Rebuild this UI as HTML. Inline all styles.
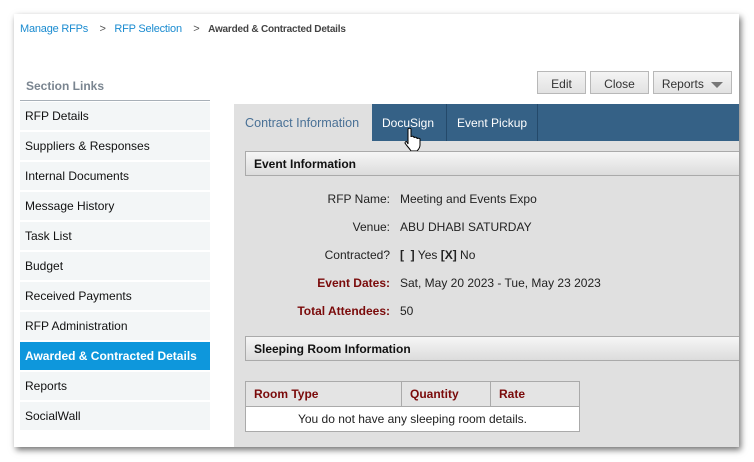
<!DOCTYPE html>
<html><head><style>
*{margin:0;padding:0;box-sizing:border-box}
body{width:754px;height:462px;background:#fff;font-family:"Liberation Sans",Arial,sans-serif;font-size:12px;position:relative;overflow:hidden}
.card{position:absolute;left:14px;top:14px;width:725px;height:433px;background:#fff;box-shadow:2px 3px 6px rgba(0,0,0,.55)}
.a{position:absolute}
.bc{top:23px;left:20px;color:#1a8bd0;font-size:11px;letter-spacing:-0.2px}
.bc b{color:#444;font-weight:bold}
.sl{left:26px;top:79px;font-weight:bold;color:#7a8590;font-size:12px}
.line{left:20px;top:100px;width:190px;height:1px;background:#a8b0b8}
.item{position:absolute;left:20px;width:190px;height:28px;background:#f3f6f7;color:#111;padding:7px 5px;font-size:12px}
.item.act{background:#0e97dc;color:#fff;font-weight:bold}
.btn{position:absolute;top:71px;height:23px;border:1px solid #b8b8b8;background:linear-gradient(#f4f4f4,#e2e2e2);color:#333;text-align:center;padding-top:5px;font-size:12px}
.panel{left:234px;top:104px;width:505px;height:343px;background:#e0e0e0}
.tabs{left:234px;top:104px;width:505px;height:37px;background:#356186}
.tab{position:absolute;top:104px;height:37px;color:#fff;padding-top:12px;font-size:12px;border-right:1px solid #24496a}
.hdr{position:absolute;left:245px;width:494px;height:25px;border:1px solid #aaa;border-right:none;background:linear-gradient(#f6f6f6,#dcdcdc);font-weight:bold;padding:5px 8px;color:#111}
.lab{position:absolute;width:160px;left:230px;text-align:right;color:#222}
.lab.r{color:#7a0a0a;font-weight:bold}
.val{position:absolute;left:400px;color:#222}
table{position:absolute;left:245px;top:381px;width:335px;border-collapse:collapse;background:#fff}
td,th{border:1px solid #aaa;font-size:12px;height:25px}
th{background:#e4e4e4;color:#7a0a0a;text-align:left;padding-left:8px}
</style></head><body>
<div class="card"></div>
<div class="a bc">Manage RFPs &nbsp;&nbsp; <span style="color:#555">&gt;</span> &nbsp;&nbsp;RFP Selection &nbsp;&nbsp; <span style="color:#555">&gt;</span> &nbsp;&nbsp;<b style="font-size:10px">Awarded &amp; Contracted Details</b></div>
<div class="a sl">Section Links</div>
<div class="a line"></div>
<div class="item" style="top:102px">RFP Details</div>
<div class="item" style="top:132px">Suppliers &amp; Responses</div>
<div class="item" style="top:162px">Internal Documents</div>
<div class="item" style="top:192px">Message History</div>
<div class="item" style="top:222px">Task List</div>
<div class="item" style="top:252px">Budget</div>
<div class="item" style="top:282px">Received Payments</div>
<div class="item" style="top:312px">RFP Administration</div>
<div class="item act" style="top:342px">Awarded &amp; Contracted Details</div>
<div class="item" style="top:372px">Reports</div>
<div class="item" style="top:402px">SocialWall</div>
<div class="btn" style="left:537px;width:49px">Edit</div>
<div class="btn" style="left:590px;width:59px">Close</div>
<div class="btn" style="left:653px;width:79px;padding-left:0">Reports <span style="display:inline-block;width:0;height:0;border-left:6px solid transparent;border-right:6px solid transparent;border-top:6px solid #777;margin-left:4px;vertical-align:middle"></span></div>
<div class="a panel"></div>
<div class="a tabs"></div>
<div class="tab" style="left:234px;width:138px;background:#e0e0e0;color:#4a7196;padding-left:11px;border:none;font-size:12.6px">Contract Information</div>
<div class="tab" style="left:372px;width:75px;padding-left:10px">DocuSign</div>
<div class="tab" style="left:447px;width:91px;padding-left:10px">Event Pickup</div>
<svg class="a" style="left:404px;top:127px" width="20" height="26" viewBox="0 0 20 26"><path d="M4 2c1-1 2.5-1 3 0v8c0-1 3-1 3 0v1c0-1 3-1 3 0v1c0-1 3-1 3 0v6c0 3-2 5-3 6H7c-1-2-5-6-6-8 0-1 1-2 2-1l1 2z" fill="#fff" stroke="#000" stroke-width="1"/></svg>
<div class="hdr" style="top:151px">Event Information</div>
<div class="lab" style="top:192px">RFP Name:</div><div class="val" style="top:192px">Meeting and Events Expo</div>
<div class="lab" style="top:220px">Venue:</div><div class="val" style="top:220px">ABU DHABI SATURDAY</div>
<div class="lab" style="top:248px">Contracted?</div><div class="val" style="top:248px"><b>[ &nbsp;]</b> Yes <b>[X]</b> No</div>
<div class="lab r" style="top:276px">Event Dates:</div><div class="val" style="top:276px">Sat, May 20 2023 - Tue, May 23 2023</div>
<div class="lab r" style="top:304px">Total Attendees:</div><div class="val" style="top:304px">50</div>
<div class="hdr" style="top:336px">Sleeping Room Information</div>
<table><tr><th style="width:156px">Room Type</th><th style="width:89px">Quantity</th><th>Rate</th></tr>
<tr><td colspan="3" style="text-align:center;color:#222">You do not have any sleeping room details.</td></tr></table>
</body></html>
